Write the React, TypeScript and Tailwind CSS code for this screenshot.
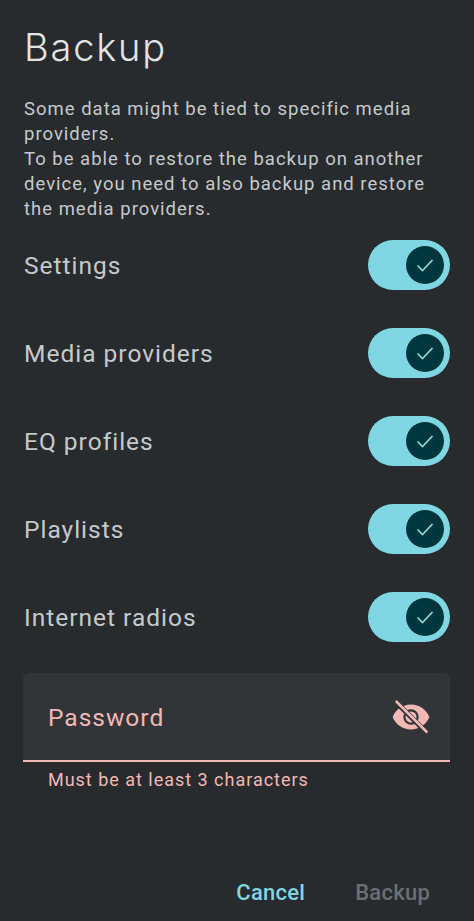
import React from "react";

const Toggle = () => (
  <div className="w-[82px] h-[50px] rounded-full bg-[#80d6e2] flex items-center justify-end pr-[6px] shrink-0">
    <div className="w-[38px] h-[38px] rounded-full bg-[#00363d] flex items-center justify-center">
      <svg viewBox="0 0 24 24" className="w-[24px] h-[24px]" fill="none" stroke="#8fdde8" strokeWidth="1.6">
        <path d="M4.5 12.5l5 5 10-10.5" />
      </svg>
    </div>
  </div>
);

const rows = ["Settings", "Media providers", "EQ profiles", "Playlists", "Internet radios"];

export default function App() {
  return (
    <div className="w-[474px] h-[921px] bg-[#272b2e] flex flex-col overflow-hidden font-['Roboto',sans-serif]">
      <div className="pt-[24px] px-[24px] font-['Inter',sans-serif] font-light text-[38px] leading-[46px] tracking-[1.8px] text-[#e2e4e6]">
        Backup
      </div>
      <div className="mt-[27px] px-[24px] text-[18.5px] leading-[25px] tracking-[1px] text-[#c6c9cc]">
        Some data might be tied to specific media providers.
        <br />
        To be able to restore the backup on another device, you need to also backup and restore the media providers.
      </div>
      <div className="mt-[18px] px-[24px] flex flex-col gap-[38px]">
        {rows.map((r) => (
          <div key={r} className="flex items-center justify-between h-[50px]">
            <span className="pt-[2px] text-[24.5px] tracking-[1px] text-[#c6c9cc]">{r}</span>
            <Toggle />
          </div>
        ))}
      </div>
      <div className="ml-[23px] mr-[24px] mt-[31px] h-[89px] bg-[#313538] rounded-t-[6px] border-b-2 border-[#f2b8b5] flex items-center justify-between pl-[25px] pr-[19px]">
        <span className="pt-[3px] text-[24.5px] tracking-[1px] text-[#f2b8b5]">Password</span>
        <svg viewBox="0 0 24 24" className="w-[40px] h-[40px]">
          <path
            fill="#f2b8b5"
            fillRule="evenodd"
            d="M12 4.5C7 4.5 2.73 7.61 1 12c1.73 4.39 6 7.5 11 7.5s9.27-3.11 11-7.5c-1.73-4.39-6-7.5-11-7.5zM12 16.6a4.6 4.6 0 1 1 0-9.2 4.6 4.6 0 0 1 0 9.2z"
          />
          <circle cx="12" cy="12" r="3.3" fill="#f2b8b5" />
          <path d="M3.6 3.6l17.5 17.5" stroke="#313538" strokeWidth="3" />
          <path d="M2.9 2.4l18.9 18.9" stroke="#f2b8b5" strokeWidth="1.5" />
        </svg>
      </div>
      <div className="mt-[6px] pl-[48px] text-[18px] leading-[24px] tracking-[0.98px] text-[#f2b8b5]">
        Must be at least 3 characters
      </div>
      <div className="mt-auto pb-[14px] pr-[44px] flex justify-end gap-[50px] text-[22px] leading-[28px] font-medium tracking-[0.25px]">
        <span className="text-[#80d6e2]">Cancel</span>
        <span className="text-[#6b6f72]">Backup</span>
      </div>
    </div>
  );
}
